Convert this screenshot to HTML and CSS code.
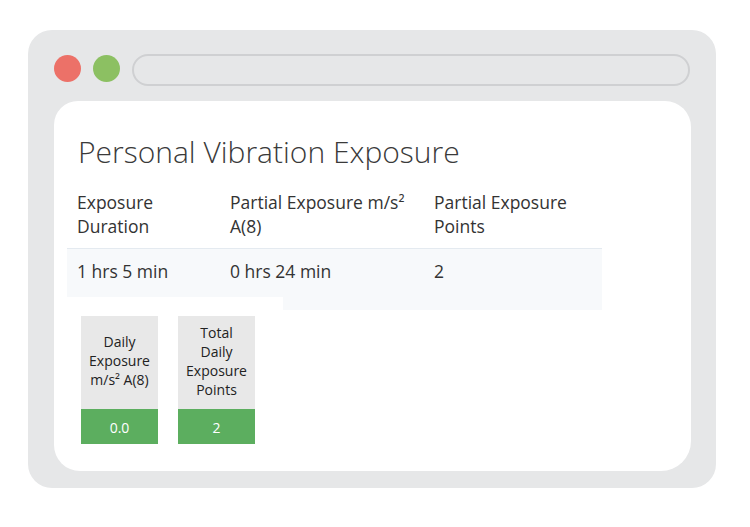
FILE: index.html
```html
<!DOCTYPE html>
<html lang="en">
<head>
<meta charset="utf-8">
<title>Personal Vibration Exposure</title>
<link rel="stylesheet" href="styles.css">
</head>
<body>
<div class="frame">
  <div class="toolbar">
    <span class="dot dot-red"></span>
    <span class="dot dot-green"></span>
    <div class="address"></div>
  </div>
  <div class="panel">
    <h1 class="title">Personal Vibration Exposure</h1>
    <div class="table">
      <div class="row head">
        <div class="cell c1">Exposure<br>Duration</div>
        <div class="cell c2">Partial Exposure m/s²<br>A(8)</div>
        <div class="cell c3">Partial Exposure<br>Points</div>
      </div>
      <div class="row body">
        <div class="cell c1">1 hrs 5 min</div>
        <div class="cell c2">0 hrs 24 min</div>
        <div class="cell c3">2</div>
      </div>
      <div class="row-tail"></div>
    </div>
    <div class="stats">
      <div class="stat">
        <div class="stat-label">Daily<br>Exposure<br>m/s² A(8)</div>
        <div class="stat-value">0.0</div>
      </div>
      <div class="stat">
        <div class="stat-label">Total<br>Daily<br>Exposure<br>Points</div>
        <div class="stat-value">2</div>
      </div>
    </div>
  </div>
</div>
</body>
</html>
```
FILE: styles.css
```css
html, body {
  margin: 0;
  padding: 0;
  background: #ffffff;
}
body {
  font-family: "Open Sans", "Liberation Sans", sans-serif;
  color: #333333;
}
.frame {
  box-sizing: border-box;
  margin: 30px 0 0 28px;
  width: 688px;
  height: 458px;
  background: #e6e7e8;
  border-radius: 24px;
  padding: 24px 25px 17px 26px;
  display: flex;
  flex-direction: column;
}
.toolbar {
  display: flex;
  align-items: center;
  gap: 12px;
  height: 32px;
}
.dot {
  width: 27px;
  height: 27px;
  border-radius: 50%;
  margin-bottom: 3px;
  flex: none;
}
.dot-red { background: #ec7168; }
.dot-green { background: #8cc062; }
.address {
  box-sizing: border-box;
  flex: 1;
  height: 32px;
  margin-right: 1px;
  border: 2px solid #cfd0d2;
  border-radius: 16px;
  background: #e6e7e8;
}
.panel {
  margin-top: 15px;
  flex: 1;
  background: #ffffff;
  border-radius: 24px 26px 30px 26px;
  padding: 30px 0 0 13px;
}
.title {
  margin: 0 0 0 11px;
  font-size: 30px;
  font-weight: 300;
  line-height: 42px;
  color: #3a3a3a;
}
.table {
  width: 535px;
  font-size: 17.5px;
  line-height: 24px;
}
.row {
  display: flex;
}
.cell {
  box-sizing: border-box;
  padding: 0 10px;
}
.c1 { width: 153px; }
.c2 { width: 204px; }
.c3 { width: 178px; }
.head {
  padding: 17px 0 10px;
  border-bottom: 1px solid #e4eaf0;
}
.body {
  background: #f7f9fb;
  padding: 10px 0 14px;
}
.row-tail {
  margin-left: 216px;
  height: 13px;
  background: #f7f9fb;
}
.stats {
  display: flex;
  gap: 20px;
  margin: 6px 0 0 14px;
}
.stat {
  width: 77px;
  font-size: 14px;
  line-height: 19px;
  text-align: center;
}
.stat-label {
  box-sizing: border-box;
  height: 93px;
  padding-bottom: 4px;
  background: #e8e8e8;
  color: #222222;
  display: flex;
  align-items: center;
  justify-content: center;
}
.stat-value {
  box-sizing: border-box;
  height: 35px;
  padding-top: 2px;
  background: #5cae5f;
  color: #ffffff;
  font-weight: 500;
  display: flex;
  align-items: center;
  justify-content: center;
}
```
